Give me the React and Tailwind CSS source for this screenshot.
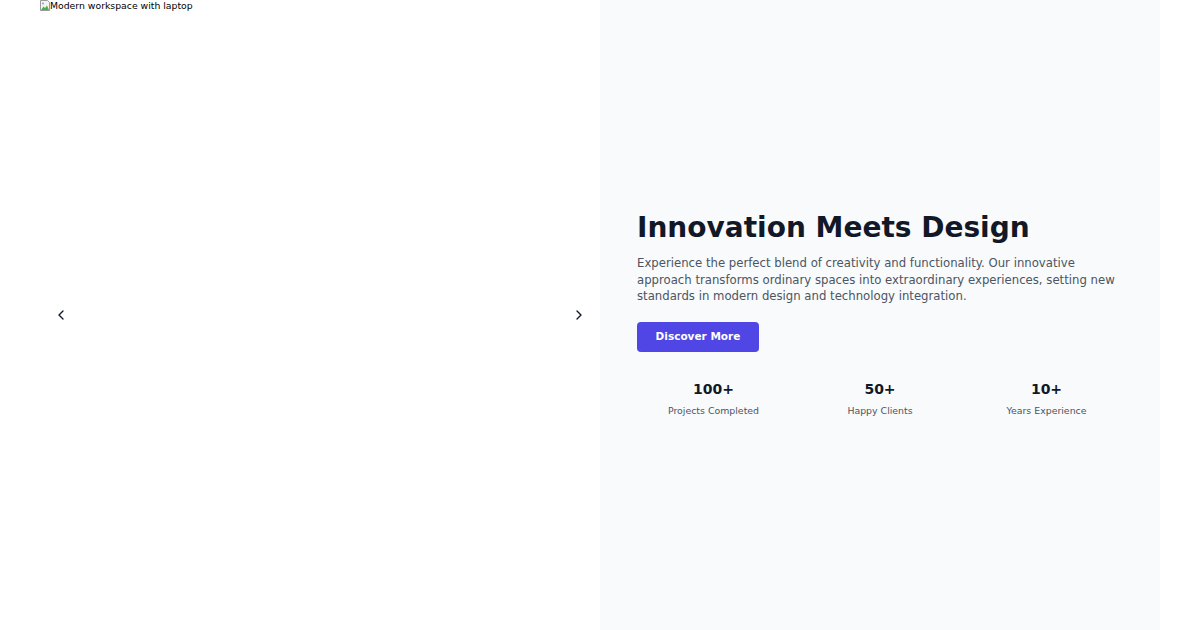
import { ChevronLeft, ChevronRight } from "lucide-react";

const stats = [
  { value: "100+", label: "Projects Completed" },
  { value: "50+", label: "Happy Clients" },
  { value: "10+", label: "Years Experience" },
];

function BrokenImage() {
  return (
    <svg width="10" height="11" viewBox="0 0 10 11" className="shrink-0">
      <path d="M0.5 0.5h7l2 2v8h-9z" fill="#f4f4f4" stroke="#9a9a9a" strokeWidth="1" />
      <path d="M1 10l2.5-3.5 1.5 1.5 2-2.5 2 4.5z" fill="#4caf50" />
      <circle cx="3" cy="3.5" r="1" fill="#6fa8dc" />
    </svg>
  );
}

export default function App() {
  return (
    <div
      className="w-full h-[630px] bg-white"
      style={{ fontFamily: "'DejaVu Sans', sans-serif" }}
    >
      <div className="mx-10 h-full grid grid-cols-2">
        {/* slider side */}
        <div className="relative h-full">
          <div className="flex items-start text-[9.3px] leading-[12px] text-black">
            <BrokenImage />
            <span>Modern workspace with laptop</span>
          </div>
          <button className="absolute left-[13px] top-1/2 -translate-y-1/2 p-0 text-[#111827]">
            <ChevronLeft size={16} strokeWidth={2} />
          </button>
          <button className="absolute right-[13px] top-1/2 -translate-y-1/2 p-0 text-[#111827]">
            <ChevronRight size={16} strokeWidth={2} />
          </button>
        </div>

        {/* content side */}
        <div className="bg-[#f9fafb] h-full flex items-center px-[37px]">
          <div className="w-full pb-[1px]">
            <h1 className="text-[28px] leading-[34px] font-bold text-[#111827]">
              Innovation Meets Design
            </h1>
            <p className="mt-[10px] text-[11.7px] leading-[16.5px] text-[#4b5563]">
              Experience the perfect blend of creativity and functionality. Our innovative
              approach transforms ordinary spaces into extraordinary experiences, setting new
              standards in modern design and technology integration.
            </p>
            <button className="mt-[17px] w-[122px] h-[30px] rounded-[4px] bg-[#4f46e5] text-white text-[10.5px] font-bold">
              Discover More
            </button>
            <div className="mt-[27px] grid grid-cols-3 gap-[13.5px]">
              {stats.map((s) => (
                <div key={s.label} className="text-center">
                  <div className="text-[14px] leading-[20px] font-bold text-[#111827]">{s.value}</div>
                  <div className="mt-[5px] text-[9.4px] leading-[14px] text-[#4b5563]">{s.label}</div>
                </div>
              ))}
            </div>
          </div>
        </div>
      </div>
    </div>
  );
}
